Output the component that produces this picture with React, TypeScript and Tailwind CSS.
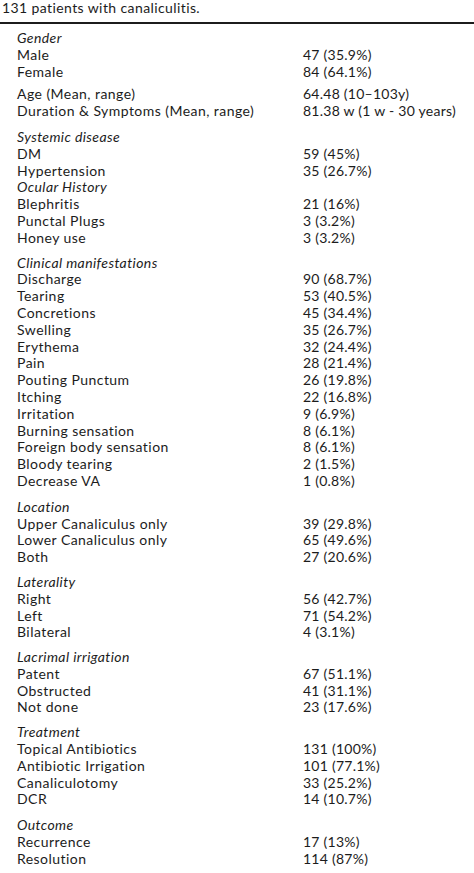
type Row = [string, string];
type Group = { title: string; rows: Row[]; gap: string };

const groups: Group[] = [
  {
    title: "Gender",
    gap: "mt-0",
    rows: [
      ["Male", "47 (35.9%)"],
      ["Female", "84 (64.1%)"],
    ],
  },
  {
    title: "",
    gap: "mt-[6px]",
    rows: [
      ["Age (Mean, range)", "64.48 (10–103y)"],
      ["Duration & Symptoms (Mean, range)", "81.38 w (1 w - 30 years)"],
    ],
  },
  {
    title: "Systemic disease",
    gap: "mt-[9px]",
    rows: [
      ["DM", "59 (45%)"],
      ["Hypertension", "35 (26.7%)"],
    ],
  },
  {
    title: "Ocular History",
    gap: "mt-0",
    rows: [
      ["Blephritis", "21 (16%)"],
      ["Punctal Plugs", "3 (3.2%)"],
      ["Honey use", "3 (3.2%)"],
    ],
  },
  {
    title: "Clinical manifestations",
    gap: "mt-[8px]",
    rows: [
      ["Discharge", "90 (68.7%)"],
      ["Tearing", "53 (40.5%)"],
      ["Concretions", "45 (34.4%)"],
      ["Swelling", "35 (26.7%)"],
      ["Erythema", "32 (24.4%)"],
      ["Pain", "28 (21.4%)"],
      ["Pouting Punctum", "26 (19.8%)"],
      ["Itching", "22 (16.8%)"],
      ["Irritation", "9 (6.9%)"],
      ["Burning sensation", "8 (6.1%)"],
      ["Foreign body sensation", "8 (6.1%)"],
      ["Bloody tearing", "2 (1.5%)"],
      ["Decrease VA", "1 (0.8%)"],
    ],
  },
  {
    title: "Location",
    gap: "mt-[9px]",
    rows: [
      ["Upper Canaliculus only", "39 (29.8%)"],
      ["Lower Canaliculus only", "65 (49.6%)"],
      ["Both", "27 (20.6%)"],
    ],
  },
  {
    title: "Laterality",
    gap: "mt-[8px]",
    rows: [
      ["Right", "56 (42.7%)"],
      ["Left", "71 (54.2%)"],
      ["Bilateral", "4 (3.1%)"],
    ],
  },
  {
    title: "Lacrimal irrigation",
    gap: "mt-[8px]",
    rows: [
      ["Patent", "67 (51.1%)"],
      ["Obstructed", "41 (31.1%)"],
      ["Not done", "23 (17.6%)"],
    ],
  },
  {
    title: "Treatment",
    gap: "mt-[8px]",
    rows: [
      ["Topical Antibiotics", "131 (100%)"],
      ["Antibiotic Irrigation", "101 (77.1%)"],
      ["Canaliculotomy", "33 (25.2%)"],
      ["DCR", "14 (10.7%)"],
    ],
  },
  {
    title: "Outcome",
    gap: "mt-[9px]",
    rows: [
      ["Recurrence", "17 (13%)"],
      ["Resolution", "114 (87%)"],
    ],
  },
];

export default function App() {
  return (
    <div className="w-[474px] h-[873px] bg-white text-[#1c1c1c] font-['Lato',sans-serif] text-[14px] leading-[16.8px] overflow-hidden">
      <p className="pl-[2px] leading-[15px] tracking-[0.4px]">131 patients with canaliculitis.</p>
      <div className="mt-[7px] h-[2px] bg-[#1c1c1c]" />
      <div className="pl-[17px] pt-[6px]">
        {groups.map((g, i) => (
          <div key={i} className={g.gap}>
            {g.title && <div className="italic tracking-[0.4px]">{g.title}</div>}
            {g.rows.map(([label, value]) => (
              <div key={label} className="grid grid-cols-[286px_1fr]">
                <span className="tracking-[0.45px]">{label}</span>
                <span className="tracking-[0.25px]">{value}</span>
              </div>
            ))}
          </div>
        ))}
      </div>
    </div>
  );
}
